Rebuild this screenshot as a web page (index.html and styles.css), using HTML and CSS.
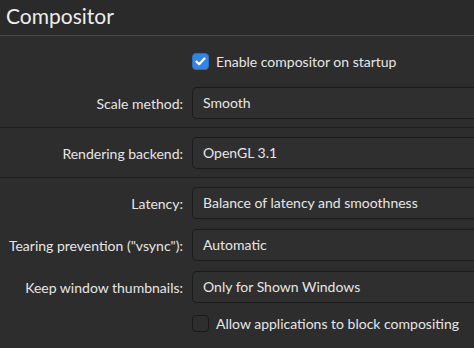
FILE: index.html
```html
<!DOCTYPE html>
<html lang="en">
<head>
    <meta charset="UTF-8">
    <link rel="stylesheet" href="styles.css">
    <title>Compositor</title>
</head>
<body>
    <header class="header">Compositor</header>

    <section class="group">
        <div class="row check-row first">
            <span></span>
            <label class="check">
                <span class="box checked">
                    <svg width="11" height="9" viewBox="0 0 11 9"><path d="M1.5 4.6 L4.2 7.2 L9.5 1.6" fill="none" stroke="#fff" stroke-width="2.2" stroke-linecap="round" stroke-linejoin="round"/></svg>
                </span>
                Enable compositor on startup
            </label>
        </div>
        <div class="row">
            <span class="label">Scale method:</span>
            <div class="combo">Smooth</div>
        </div>
    </section>

    <section class="group">
        <div class="row">
            <span class="label">Rendering backend:</span>
            <div class="combo">OpenGL 3.1</div>
        </div>
    </section>

    <section class="group last">
        <div class="row">
            <span class="label">Latency:</span>
            <div class="combo">Balance of latency and smoothness</div>
        </div>
        <div class="row">
            <span class="label">Tearing prevention ("vsync"):</span>
            <div class="combo">Automatic</div>
        </div>
        <div class="row">
            <span class="label">Keep window thumbnails:</span>
            <div class="combo">Only for Shown Windows</div>
        </div>
        <div class="row check-row">
            <span></span>
            <label class="check">
                <span class="box"></span>
                Allow applications to block compositing
            </label>
        </div>
    </section>
</body>
</html>
```

FILE: styles.css
```css
* {
    box-sizing: border-box;
}

html, body {
    margin: 0;
    padding: 0;
    width: 474px;
    height: 348px;
    overflow: hidden;

    background-color: #2d2d2d;
    color: #e6e6e6;

    font-family: "Lato", "Liberation Sans", sans-serif;
    font-size: 14px;
}

.header {
    height: 36px;
    padding-left: 6px;

    background-color: #2a2a2a;
    border-bottom: 1px solid #4a4a4a;

    font-size: 21px;
    line-height: 32px;
    color: #ededed;
}

.group {
    display: flex;
    flex-direction: column;
    gap: 10px;

    padding: 9px 0 8px;

    border-bottom: 1px solid #1f1f1f;
}

.group.last {
    border-bottom: none;
}

.row {
    display: grid;
    grid-template-columns: 183px 1fr;
    column-gap: 9px;
    align-items: center;

    height: 32px;
}

.check-row {
    height: 20px;
}

.check-row.first {
    margin: 6px 0 6px;
}

.label {
    text-align: right;
    white-space: nowrap;
}

.combo {
    height: 32px;
    padding-left: 10px;

    background-color: #2f2f2f;
    border: 1px solid #1c1c1c;
    border-right: none;
    border-radius: 5px 0 0 5px;

    line-height: 30px;
}

.check {
    display: flex;
    align-items: center;
    gap: 7px;
}

.box {
    display: flex;
    align-items: center;
    justify-content: center;

    width: 17px;
    height: 17px;

    background-color: #2e2e2e;
    border: 1px solid #191919;
    border-radius: 4px;
}

.box.checked {
    background-color: #3584e4;
    border-color: #2a6fc4;
}
```
